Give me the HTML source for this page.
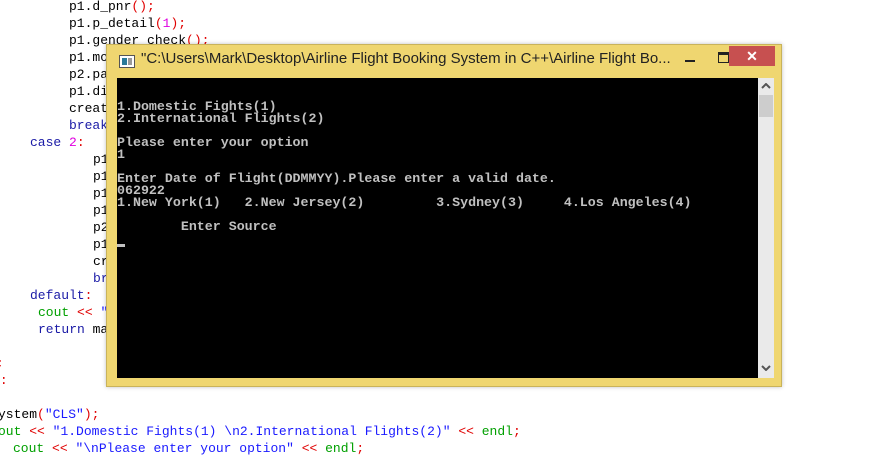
<!DOCTYPE html>
<html><head><meta charset="utf-8"><style>
body{margin:0;width:869px;height:447px;overflow:hidden;background:#fff;position:relative;font-family:"Liberation Mono",monospace;}
.c{position:absolute;font-size:13px;line-height:17px;white-space:pre;color:#000;}
.r{color:#e00000}.m{color:#e000e0}.k{color:#1a1aa6}.g{color:#00a000}.s{color:#1a1aff}
#win{position:absolute;left:106px;top:44px;width:676px;height:343px;background:#efd670;border:1px solid #c9b35a;box-sizing:border-box;box-shadow:0 0 4px rgba(0,0,0,.25)}
#title{position:absolute;left:34px;top:5px;font-family:"Liberation Sans",sans-serif;font-size:15px;color:#222;white-space:pre}
#con{position:absolute;left:10px;top:33px;width:641px;height:300px;background:#000}
#con pre{margin:0;position:absolute;left:0;top:23px;font-family:"Liberation Mono",monospace;font-weight:bold;font-size:13.3px;line-height:12px;color:#c0c0c0}
#sb{position:absolute;left:651px;top:33px;width:16px;height:300px;background:#eaeaea}
</style></head><body>
<div class="c" style="left:69px;top:-2px">p1.d_pnr<span class="r">();</span></div>
<div class="c" style="left:69px;top:15px">p1.p_detail<span class="r">(</span><span class="m">1</span><span class="r">);</span></div>
<div class="c" style="left:69px;top:32px">p1.gender_check<span class="r">();</span></div>
<div class="c" style="left:69px;top:49px">p1.mo</div>
<div class="c" style="left:69px;top:66px">p2.pa</div>
<div class="c" style="left:69px;top:83px">p1.di</div>
<div class="c" style="left:69px;top:100px">creat</div>
<div class="c k" style="left:69px;top:117px">break</div>
<div class="c" style="left:30px;top:134px"><span class="k">case</span> <span class="m">2</span><span class="r">:</span></div>
<div class="c" style="left:93px;top:151px">p1</div>
<div class="c" style="left:93px;top:168px">p1</div>
<div class="c" style="left:93px;top:185px">p1</div>
<div class="c" style="left:93px;top:202px">p1</div>
<div class="c" style="left:93px;top:219px">p2</div>
<div class="c" style="left:93px;top:236px">p1</div>
<div class="c" style="left:93px;top:253px">cr</div>
<div class="c k" style="left:93px;top:270px">br</div>
<div class="c" style="left:30px;top:287px"><span class="k">default</span><span class="r">:</span></div>
<div class="c" style="left:38px;top:304px"><span class="g">cout</span> <span class="r">&lt;&lt;</span> <span class="s">"</span></div>
<div class="c" style="left:38px;top:321px"><span class="k">return</span> ma</div>
<div class="c r" style="left:-4px;top:355px">;</div>
<div class="c" style="left:-8px;top:372px"><span class="m">2</span><span class="r">:</span></div>
<div class="c" style="left:-2px;top:406px">ystem<span class="r">(</span><span class="s">"CLS"</span><span class="r">);</span></div>
<div class="c" style="left:-2px;top:423px"><span class="g">out</span> <span class="r">&lt;&lt;</span> <span class="s">"1.Domestic Fights(1) \n2.International Flights(2)"</span> <span class="r">&lt;&lt;</span> <span class="g">endl</span><span class="r">;</span></div>
<div class="c" style="left:13px;top:440px"><span class="g">cout</span> <span class="r">&lt;&lt;</span> <span class="s">"\nPlease enter your option"</span> <span class="r">&lt;&lt;</span> <span class="g">endl</span><span class="r">;</span></div>

<div id="win">
 <svg style="position:absolute;left:12px;top:10px" width="16" height="13"><rect x=".5" y=".5" width="15" height="12" fill="#fff" stroke="#555"/><rect x="3" y="3" width="5" height="7" fill="#2a7a9a"/><rect x="9" y="3" width="4" height="7" fill="#999"/></svg>
 <div id="title">"C:\Users\Mark\Desktop\Airline Flight Booking System in C++\Airline Flight Bo...</div>
 <div style="position:absolute;left:578px;top:15px;width:10px;height:2px;background:#222"></div>
 <div style="position:absolute;left:611px;top:7px;width:9px;height:7px;border:1.5px solid #222;border-top-width:3px"></div>
 <div style="position:absolute;left:622px;top:1px;width:46px;height:20px;background:#c75050;color:#fff;font:bold 14px 'Liberation Sans',sans-serif;text-align:center;line-height:20px">✕</div>
 <div id="con"><pre>1.Domestic Fights(1)
2.International Flights(2)

Please enter your option
1

Enter Date of Flight(DDMMYY).Please enter a valid date.
062922
1.New York(1)   2.New Jersey(2)         3.Sydney(3)     4.Los Angeles(4)

        Enter Source
</pre><div style="position:absolute;left:0;top:166px;width:8px;height:3px;background:#c0c0c0"></div></div>
 <div id="sb">
  <svg style="position:absolute;left:3px;top:5px" width="10" height="6"><path d="M1 5 L5 1 L9 5" stroke="#555" stroke-width="2" fill="none"/></svg>
  <div style="position:absolute;left:1px;top:17px;width:14px;height:22px;background:#cdcdcd"></div>
  <svg style="position:absolute;left:3px;top:287px" width="10" height="6"><path d="M1 1 L5 5 L9 1" stroke="#555" stroke-width="2" fill="none"/></svg>
 </div>
</div>
</body></html>
